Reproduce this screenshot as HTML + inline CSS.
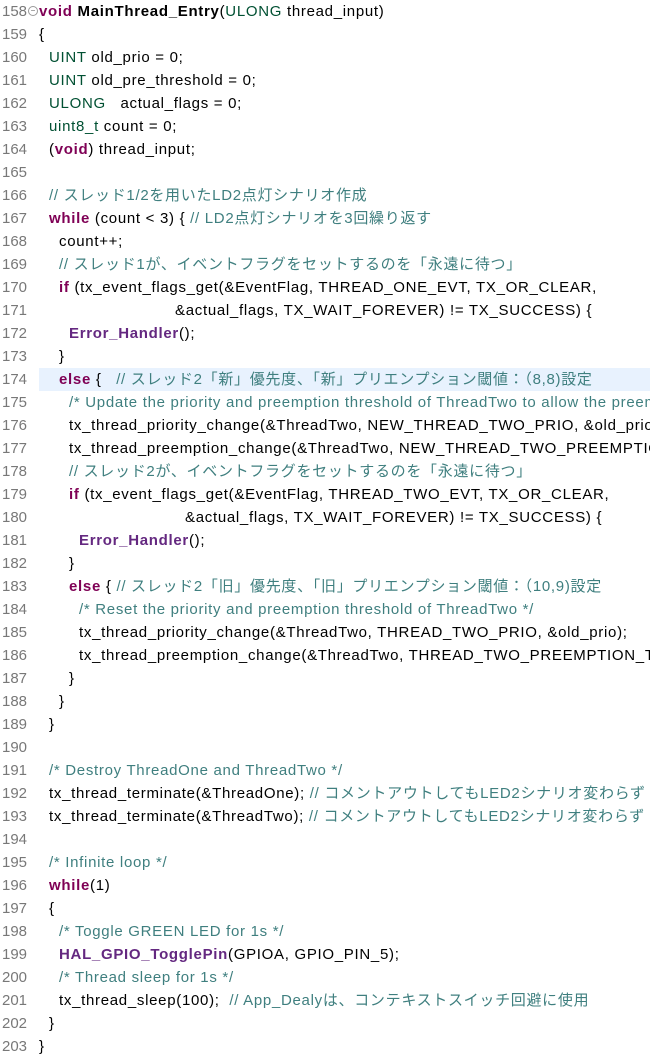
<!DOCTYPE html><html><head><meta charset="utf-8"><style>
body{margin:0;background:#fff;width:650px;height:1058px;overflow:hidden;font-family:"Liberation Sans","Noto Sans CJK JP",sans-serif;font-size:15px;}
.l{position:relative;height:23px;line-height:23px;white-space:pre;overflow:hidden;}
.n{position:absolute;left:2px;width:30px;color:#787878;}
.c{position:absolute;left:39px;color:#000;letter-spacing:0.7px;}
.c.hl{background:#e8f2fe;right:0;}
.k{color:#7f0055;font-weight:bold}
.t{color:#005032}
.m{color:#3f7f7f}
.f{color:#642880;font-weight:bold}
.b{font-weight:bold}
.fold{position:absolute;left:28px;top:6px;width:8px;height:8px;border:1px solid #999;border-radius:50%;font-size:8px;line-height:8px;text-align:center;color:#666}
</style></head><body>
<div class="l"><span class="n">158</span><span class="fold">−</span><span class="c"><span class="k">void</span> <span class="b">MainThread_Entry</span>(<span class="t">ULONG</span> thread_input)</span></div>
<div class="l"><span class="n">159</span><span class="c">{</span></div>
<div class="l"><span class="n">160</span><span class="c" style="left:49px"><span class="t">UINT</span> old_prio = 0;</span></div>
<div class="l"><span class="n">161</span><span class="c" style="left:49px"><span class="t">UINT</span> old_pre_threshold = 0;</span></div>
<div class="l"><span class="n">162</span><span class="c" style="left:49px"><span class="t">ULONG</span>   actual_flags = 0;</span></div>
<div class="l"><span class="n">163</span><span class="c" style="left:49px"><span class="t">uint8_t</span> count = 0;</span></div>
<div class="l"><span class="n">164</span><span class="c" style="left:49px">(<span class="k">void</span>) thread_input;</span></div>
<div class="l"><span class="n">165</span></div>
<div class="l"><span class="n">166</span><span class="c m" style="left:49px">// スレッド1/2を用いたLD2点灯シナリオ作成</span></div>
<div class="l"><span class="n">167</span><span class="c" style="left:49px"><span class="k">while</span> (count &lt; 3) { <span class="m">// LD2点灯シナリオを3回繰り返す</span></span></div>
<div class="l"><span class="n">168</span><span class="c" style="left:59px">count++;</span></div>
<div class="l"><span class="n">169</span><span class="c m" style="left:59px">// スレッド1が、イベントフラグをセットするのを「永遠に待つ」</span></div>
<div class="l"><span class="n">170</span><span class="c" style="left:59px"><span class="k">if</span> (tx_event_flags_get(&amp;EventFlag, THREAD_ONE_EVT, TX_OR_CLEAR,</span></div>
<div class="l"><span class="n">171</span><span class="c" style="left:175px">&amp;actual_flags, TX_WAIT_FOREVER) != TX_SUCCESS) {</span></div>
<div class="l"><span class="n">172</span><span class="c f" style="left:69px">Error_Handler<span style="color:#000;font-weight:normal">();</span></span></div>
<div class="l"><span class="n">173</span><span class="c" style="left:59px">}</span></div>
<div class="l"><span class="n">174</span><span class="c hl" style="left:39px;padding-left:20px"><span class="k">else</span> {   <span class="m">// スレッド2「新」優先度、「新」プリエンプション閾値：（8,8)設定</span></span></div>
<div class="l"><span class="n">175</span><span class="c m" style="left:69px">/* Update the priority and preemption threshold of ThreadTwo to allow the preemption */</span></div>
<div class="l"><span class="n">176</span><span class="c" style="left:69px">tx_thread_priority_change(&amp;ThreadTwo, NEW_THREAD_TWO_PRIO, &amp;old_prio);</span></div>
<div class="l"><span class="n">177</span><span class="c" style="left:69px">tx_thread_preemption_change(&amp;ThreadTwo, NEW_THREAD_TWO_PREEMPTION_THRESHOLD, &amp;old_pre_threshold);</span></div>
<div class="l"><span class="n">178</span><span class="c m" style="left:69px">// スレッド2が、イベントフラグをセットするのを「永遠に待つ」</span></div>
<div class="l"><span class="n">179</span><span class="c" style="left:69px"><span class="k">if</span> (tx_event_flags_get(&amp;EventFlag, THREAD_TWO_EVT, TX_OR_CLEAR,</span></div>
<div class="l"><span class="n">180</span><span class="c" style="left:185px">&amp;actual_flags, TX_WAIT_FOREVER) != TX_SUCCESS) {</span></div>
<div class="l"><span class="n">181</span><span class="c f" style="left:79px">Error_Handler<span style="color:#000;font-weight:normal">();</span></span></div>
<div class="l"><span class="n">182</span><span class="c" style="left:69px">}</span></div>
<div class="l"><span class="n">183</span><span class="c" style="left:69px"><span class="k">else</span> { <span class="m">// スレッド2「旧」優先度、「旧」プリエンプション閾値：（10,9)設定</span></span></div>
<div class="l"><span class="n">184</span><span class="c m" style="left:79px">/* Reset the priority and preemption threshold of ThreadTwo */</span></div>
<div class="l"><span class="n">185</span><span class="c" style="left:79px">tx_thread_priority_change(&amp;ThreadTwo, THREAD_TWO_PRIO, &amp;old_prio);</span></div>
<div class="l"><span class="n">186</span><span class="c" style="left:79px">tx_thread_preemption_change(&amp;ThreadTwo, THREAD_TWO_PREEMPTION_THRESHOLD, &amp;old_pre_threshold);</span></div>
<div class="l"><span class="n">187</span><span class="c" style="left:69px">}</span></div>
<div class="l"><span class="n">188</span><span class="c" style="left:59px">}</span></div>
<div class="l"><span class="n">189</span><span class="c" style="left:49px">}</span></div>
<div class="l"><span class="n">190</span></div>
<div class="l"><span class="n">191</span><span class="c m" style="left:49px">/* Destroy ThreadOne and ThreadTwo */</span></div>
<div class="l"><span class="n">192</span><span class="c" style="left:49px">tx_thread_terminate(&amp;ThreadOne); <span class="m">// コメントアウトしてもLED2シナリオ変わらず</span></span></div>
<div class="l"><span class="n">193</span><span class="c" style="left:49px">tx_thread_terminate(&amp;ThreadTwo); <span class="m">// コメントアウトしてもLED2シナリオ変わらず</span></span></div>
<div class="l"><span class="n">194</span></div>
<div class="l"><span class="n">195</span><span class="c m" style="left:49px">/* Infinite loop */</span></div>
<div class="l"><span class="n">196</span><span class="c" style="left:49px"><span class="k">while</span>(1)</span></div>
<div class="l"><span class="n">197</span><span class="c" style="left:49px">{</span></div>
<div class="l"><span class="n">198</span><span class="c m" style="left:59px">/* Toggle GREEN LED for 1s */</span></div>
<div class="l"><span class="n">199</span><span class="c" style="left:59px"><span class="f">HAL_GPIO_TogglePin</span>(GPIOA, GPIO_PIN_5);</span></div>
<div class="l"><span class="n">200</span><span class="c m" style="left:59px">/* Thread sleep for 1s */</span></div>
<div class="l"><span class="n">201</span><span class="c" style="left:59px">tx_thread_sleep(100);  <span class="m">// App_Dealyは、コンテキストスイッチ回避に使用</span></span></div>
<div class="l"><span class="n">202</span><span class="c" style="left:49px">}</span></div>
<div class="l"><span class="n">203</span><span class="c">}</span></div>
</body></html>
